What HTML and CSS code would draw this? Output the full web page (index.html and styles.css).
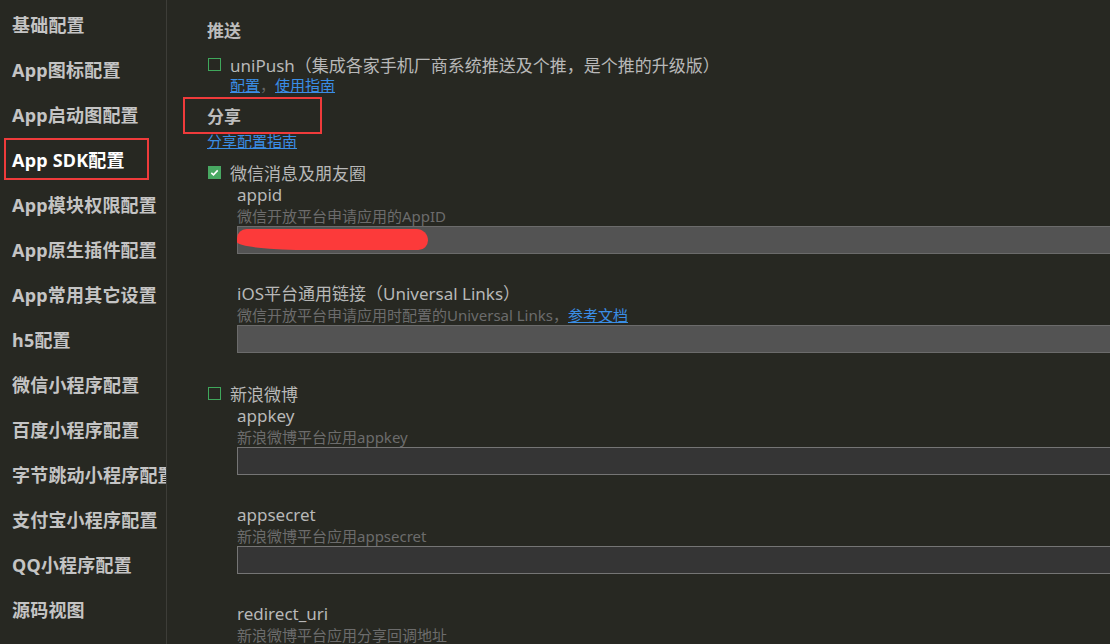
FILE: index.html
```html
<!DOCTYPE html>
<html lang="zh-CN">
<head>
    <meta charset="UTF-8">
    <title>manifest.json</title>
    <link rel="stylesheet" href="styles.css">
</head>
<body>
    <div class="sidebar">
        <div class="nav-item">基础配置</div>
        <div class="nav-item">App图标配置</div>
        <div class="nav-item">App启动图配置</div>
        <div class="nav-item active">App SDK配置<span class="mark mark-nav"></span></div>
        <div class="nav-item">App模块权限配置</div>
        <div class="nav-item">App原生插件配置</div>
        <div class="nav-item">App常用其它设置</div>
        <div class="nav-item">h5配置</div>
        <div class="nav-item">微信小程序配置</div>
        <div class="nav-item">百度小程序配置</div>
        <div class="nav-item">字节跳动小程序配置</div>
        <div class="nav-item">支付宝小程序配置</div>
        <div class="nav-item">QQ小程序配置</div>
        <div class="nav-item">源码视图</div>
    </div>

    <div class="main">
        <h3 class="section-title">推送</h3>
        <div class="option">
            <span class="checkbox"></span>
            <span>uniPush（集成各家手机厂商系统推送及个推，是个推的升级版）</span>
        </div>
        <div class="links indent">
            <a href="#">配置</a><span class="sep">，</span><a href="#">使用指南</a>
        </div>

        <h3 class="section-title share">分享<span class="mark mark-share"></span></h3>
        <div class="links"><a href="#">分享配置指南</a></div>

        <div class="option">
            <span class="checkbox checked">
                <svg viewBox="0 0 13 13" width="13" height="13"><path d="M3.3 6.8 L5.5 8.8 L9.7 4.4" fill="none" stroke="#fff" stroke-width="1.6"/></svg>
            </span>
            <span>微信消息及朋友圈</span>
        </div>
        <div class="field">
            <div class="field-label">appid</div>
            <div class="field-desc">微信开放平台申请应用的AppID</div>
            <div class="input">
                <span class="scribble"></span>
            </div>
        </div>
        <div class="field">
            <div class="field-label">iOS平台通用链接（Universal Links）</div>
            <div class="field-desc">微信开放平台申请应用时配置的Universal Links，<a href="#">参考文档</a></div>
            <div class="input"></div>
        </div>

        <div class="option">
            <span class="checkbox"></span>
            <span>新浪微博</span>
        </div>
        <div class="field">
            <div class="field-label">appkey</div>
            <div class="field-desc">新浪微博平台应用appkey</div>
            <div class="input disabled"></div>
        </div>
        <div class="field">
            <div class="field-label">appsecret</div>
            <div class="field-desc">新浪微博平台应用appsecret</div>
            <div class="input disabled"></div>
        </div>
        <div class="field">
            <div class="field-label">redirect_uri</div>
            <div class="field-desc">新浪微博平台应用分享回调地址</div>
            <div class="input disabled"></div>
        </div>
    </div>
</body>
</html>
```

FILE: styles.css
```css
html, body {
    margin: 0;
    height: 100%;
    overflow: hidden;
}
body {
    display: flex;
    background-color: #272822;
    font-family: "Noto Sans", "Noto Sans CJK SC", sans-serif;
    color: #b3b3b3;
}
a {
    color: #3a8ee6;
    text-decoration: underline;
}

/* left navigation */
.sidebar {
    width: 166px;
    flex-shrink: 0;
    padding-top: 3px;
    border-right: 1px solid #3d3d38;
    overflow: hidden;
    position: relative;
}
.nav-item {
    position: relative;
    padding-left: 12px;
    height: 45px;
    line-height: 45px;
    font-size: 18px;
    font-weight: bold;
    color: #c4c4c4;
    white-space: nowrap;
    letter-spacing: 0.2px;
}
.nav-item.active {
    color: #ffffff;
}

/* red annotation boxes */
.mark {
    position: absolute;
    border: 2px solid #ef3b3b;
    box-sizing: border-box;
}
.mark-nav {
    left: 4px;
    top: 0;
    width: 145px;
    height: 42px;
}
.mark-share {
    left: -24px;
    top: -8px;
    width: 139px;
    height: 37px;
}

/* main settings panel */
.main {
    flex: 1;
    padding-left: 40px;
    overflow: hidden;
}
.section-title {
    margin: 19px 0 0;
    font-size: 17px;
    line-height: 24px;
    color: #bdbdbd;
}
.section-title.share {
    position: relative;
    margin-top: 10px;
}
.option {
    display: flex;
    align-items: center;
    margin-top: 10px;
    height: 22px;
    font-size: 17px;
    color: #b8b8b8;
    white-space: nowrap;
}
.checkbox {
    width: 13px;
    height: 13px;
    margin: 0 9px 0 1px;
    border: 1px solid #3fa75b;
    box-sizing: border-box;
    flex-shrink: 0;
    display: flex;
}
.checkbox.checked {
    background-color: #48a862;
    border-color: #48a862;
}
.checkbox svg {
    margin: -1px;
}
.links {
    font-size: 15px;
    line-height: 20px;
    margin-top: 2px;
}
.links.indent {
    margin-top: 0;
    padding-left: 23px;
}
.sep {
    color: #666;
}

.field {
    padding-left: 30px;
    margin-top: 1px;
    margin-bottom: 29px;
}
.field-label {
    font-size: 17px;
    line-height: 22px;
    color: #b8b8b8;
    white-space: nowrap;
}
.field-desc {
    margin-top: 1px;
    font-size: 15px;
    line-height: 18px;
    color: #6c6c6c;
    white-space: nowrap;
}
.input {
    position: relative;
    margin-top: 1px;
    width: 1000px;
    height: 28px;
    box-sizing: border-box;
    background-color: #535353;
    border: 1px solid #6b6b6b;
}
.input.disabled {
    background-color: #353535;
    border-color: #757575;
}
.scribble {
    position: absolute;
    left: -1px;
    top: 2px;
    width: 191px;
    height: 21px;
    background-color: #fc3a3a;
    border-radius: 10px 12px 10px 40%;
}
```
